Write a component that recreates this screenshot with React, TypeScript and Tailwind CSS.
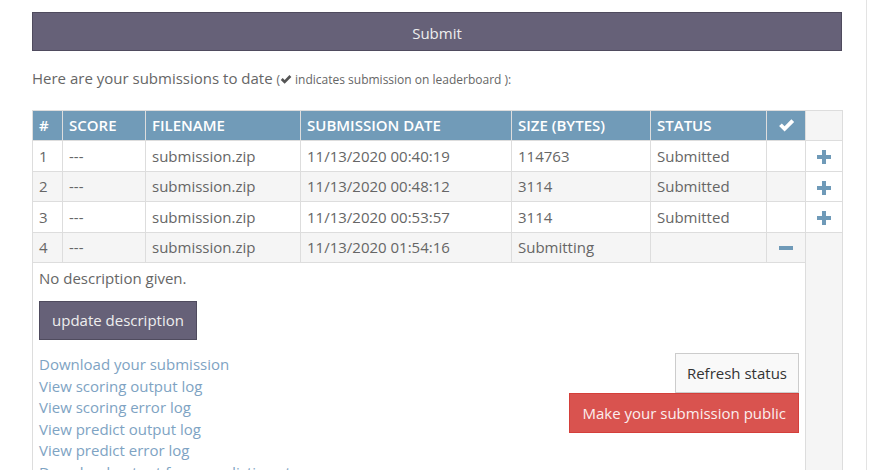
import { useState } from 'react';

type Submission = {
    id: number;
    score: string;
    filename: string;
    date: string;
    size: string;
    status: string;
};

const submissions: Submission[] = [
    { id: 1, score: '---', filename: 'submission.zip', date: '11/13/2020 00:40:19', size: '114763', status: 'Submitted' },
    { id: 2, score: '---', filename: 'submission.zip', date: '11/13/2020 00:48:12', size: '3114', status: 'Submitted' },
    { id: 3, score: '---', filename: 'submission.zip', date: '11/13/2020 00:53:57', size: '3114', status: 'Submitted' },
    { id: 4, score: '---', filename: 'submission.zip', date: '11/13/2020 01:54:16', size: 'Submitting', status: '' },
];

const links = [
    'Download your submission',
    'View scoring output log',
    'View scoring error log',
    'View predict output log',
    'View predict error log',
    'Download output from prediction step',
];

const PlusIcon = () => (
    <svg width="16" height="16" viewBox="0 0 16 16" className="inline-block">
        <rect x="6" y="1" width="4" height="14" fill="#6f9ab8" />
        <rect x="1" y="6" width="14" height="4" fill="#6f9ab8" />
    </svg>
);

const MinusIcon = () => (
    <svg width="14" height="5" viewBox="0 0 14 5" className="inline-block">
        <rect x="0" y="0" width="14" height="4" fill="#6f9ab8" />
    </svg>
);

const CheckIcon = ({ className = '' }: { className?: string }) => (
    <svg viewBox="0 0 16 14" className={className}>
        <path d="M1 7.5 L3.6 5 L6.2 7.6 L12.6 1 L15.2 3.6 L6.2 12.6 Z" fill="currentColor" />
    </svg>
);

const headers = ['#', 'SCORE', 'FILENAME', 'SUBMISSION DATE', 'SIZE (BYTES)', 'STATUS'];

export default function App() {
    const [openRow, setOpenRow] = useState<number>(4);

    return (
        <div className="flex min-h-[470px] bg-white text-[15px] text-[#666]" style={{ fontFamily: '"Open Sans", "Liberation Sans", sans-serif' }}>
            <div className="w-[842px] shrink-0 pl-[32px] pt-[12px]">
                <button className="h-[39px] w-full border border-[#4f4b5e] bg-[#666178] pt-[3px] text-[15px] text-[#eeeeee]">
                    Submit
                </button>

                <p className="mt-[17px] leading-[20px]">
                    Here are your submissions to date{' '}
                    <span className="text-[12px]">
                        (<CheckIcon className="mr-[3px] inline-block h-[11px] w-[12px] -translate-y-[1px] text-[#555]" />indicates submission on leaderboard ):
                    </span>
                </p>

                <table className="mt-[20px] w-[810px] table-fixed border-collapse">
                    <colgroup>
                        <col className="w-[30px]" />
                        <col className="w-[83px]" />
                        <col className="w-[155px]" />
                        <col className="w-[211px]" />
                        <col className="w-[139px]" />
                        <col className="w-[116px]" />
                        <col className="w-[39px]" />
                        <col className="w-[37px]" />
                    </colgroup>
                    <thead>
                        <tr className="h-[30px]">
                            {headers.map((h) => (
                                <th key={h} className="border border-[#dddddd] bg-[#719bb8] px-[6px] text-left font-semibold text-white">
                                    {h}
                                </th>
                            ))}
                            <th className="border border-[#dddddd] bg-[#719bb8] text-center text-white">
                                <CheckIcon className="mx-auto h-[15px] w-[17px]" />
                            </th>
                            <th className="border border-[#dddddd] bg-[#f5f5f5]"></th>
                        </tr>
                    </thead>
                    <tbody>
                        {submissions.map((s) => {
                            const isOpen = openRow === s.id;
                            const rowBg = s.id % 2 === 0 ? 'bg-[#f5f5f5]' : 'bg-white';
                            return (
                                <>
                                    <tr key={s.id} className={`h-[30.5px] ${rowBg}`}>
                                        <td className="border border-[#dddddd] px-[6px]">{s.id}</td>
                                        <td className="border border-[#dddddd] px-[6px]">{s.score}</td>
                                        <td className="border border-[#dddddd] px-[6px]">{s.filename}</td>
                                        <td className="border border-[#dddddd] px-[6px]">{s.date}</td>
                                        <td className="border border-[#dddddd] px-[6px]">{s.size}</td>
                                        <td className="border border-[#dddddd] px-[6px]">{s.status}</td>
                                        <td className="border border-[#dddddd] text-center">
                                            {isOpen && (
                                                <button onClick={() => setOpenRow(0)} className="leading-none">
                                                    <MinusIcon />
                                                </button>
                                            )}
                                        </td>
                                        {isOpen ? (
                                            <td rowSpan={2} className="border border-[#dddddd] bg-[#f5f5f5]"></td>
                                        ) : (
                                            <td className="border border-[#dddddd] bg-white text-center">
                                                <button onClick={() => setOpenRow(s.id)} className="leading-none">
                                                    <PlusIcon />
                                                </button>
                                            </td>
                                        )}
                                    </tr>
                                    {isOpen && (
                                        <tr key={`${s.id}-detail`}>
                                            <td colSpan={7} className="border-l border-[#dddddd] bg-white px-[6px] pt-[5px] pb-[40px] align-top">
                                                <p className="leading-[20px]">No description given.</p>
                                                <button className="mt-[13px] h-[39px] border border-[#4f4b5e] bg-[#666178] px-[12px] text-[15px] text-[#eeeeee]">
                                                    update description
                                                </button>
                                                <div className="mt-[13px] flex items-start justify-between">
                                                    <div className="mt-[1px] flex flex-col">
                                                        {links.map((l) => (
                                                            <a key={l} href="#" className="leading-[21.5px] text-[#7ea3c3]">
                                                                {l}
                                                            </a>
                                                        ))}
                                                    </div>
                                                    <div className="flex flex-col items-end">
                                                        <button className="h-[40px] border border-[#cccccc] bg-[#f9f9f9] px-[11px] text-[15px] text-[#333]">
                                                            Refresh status
                                                        </button>
                                                        <button className="h-[40px] border border-[#d43f3a] bg-[#d9534f] px-[12px] text-[15px] text-[#fbeeee]">
                                                            Make your submission public
                                                        </button>
                                                    </div>
                                                </div>
                                            </td>
                                        </tr>
                                    )}
                                </>
                            );
                        })}
                    </tbody>
                </table>
            </div>
            <div className="ml-[24px] w-px shrink-0 bg-[#e3e3e3]"></div>
        </div>
    );
}
